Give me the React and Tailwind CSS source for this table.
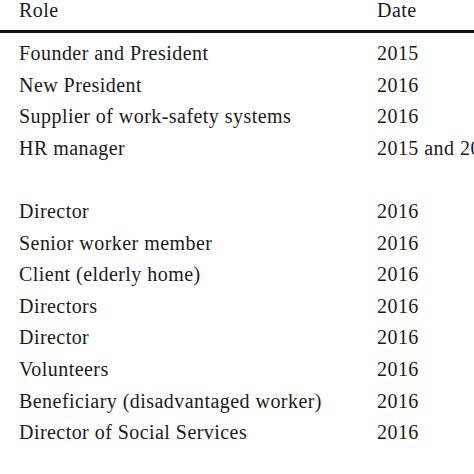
import React from "react";

const rows = [
  ["Founder and President", "2015"],
  ["New President", "2016"],
  ["Supplier of work-safety systems", "2016"],
  ["HR manager", "2015 and 2016"],
  ["", ""],
  ["Director", "2016"],
  ["Senior worker member", "2016"],
  ["Client (elderly home)", "2016"],
  ["Directors", "2016"],
  ["Director", "2016"],
  ["Volunteers", "2016"],
  ["Beneficiary (disadvantaged worker)", "2016"],
  ["Director of Social Services", "2016"],
];

export default function App() {
  return (
    <div
      className="w-[474px] h-[474px] bg-white text-[#1a1a1a] overflow-hidden tracking-[0.45px]"
      style={{ fontFamily: '"Liberation Serif", "Times New Roman", serif' }}
    >
      {/* Header */}
      <div className="flex text-[20px] leading-[18px] pt-[1px] pb-[11px] whitespace-nowrap">
        <div className="w-[377px] shrink-0 pl-[19px]">Role</div>
        <div className="shrink-0">Date</div>
      </div>
      <div className="h-[3px] bg-[#111]" />

      {/* Body */}
      <div className="mt-[5px] text-[20px] leading-[31.6px]">
        {rows.map(([role, date], i) => (
          <div key={i} className="flex h-[31.6px] whitespace-nowrap">
            <div className="w-[377px] shrink-0 pl-[19px]">{role}</div>
            <div className="shrink-0">{date}</div>
          </div>
        ))}
      </div>
    </div>
  );
}
